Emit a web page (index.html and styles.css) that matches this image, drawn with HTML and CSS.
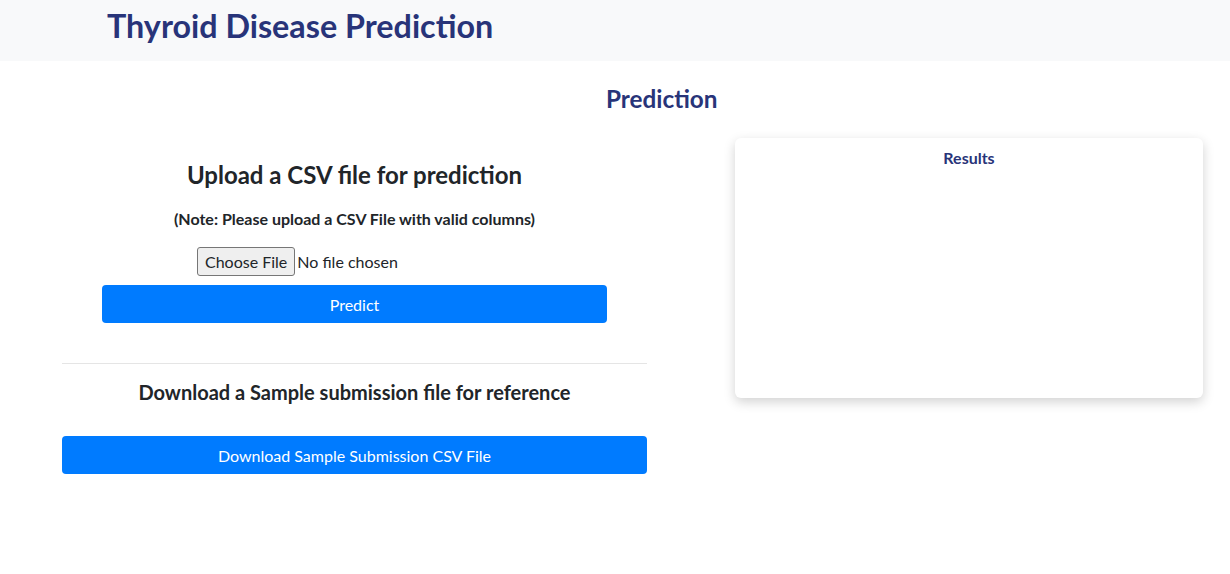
FILE: index.html
```html
<!DOCTYPE html>
<html>
<head>
<meta charset="utf-8">
<link rel="stylesheet" href="styles.css">
</head>
<body>
<header class="topbar">
  <h1 class="brand">Thyroid Disease Prediction</h1>
</header>
<main class="page">
  <h2 class="section-title">Prediction</h2>
  <div class="row">
    <section class="left">
      <h3 class="upload-title">Upload a CSV file for prediction</h3>
      <p class="note">(Note: Please upload a CSV File with valid columns)</p>
      <div class="file-row">
        <input type="file" class="file-input">
      </div>
      <div class="predict-wrap">
        <button class="btn">Predict</button>
      </div>
      <hr class="divider">
      <h4 class="download-title">Download a Sample submission file for reference</h4>
      <button class="btn btn-wide">Download Sample Submission CSV File</button>
    </section>
    <aside class="card">
      <h5 class="results">Results</h5>
    </aside>
  </div>
</main>
</body>
</html>
```

FILE: styles.css
```css
* { box-sizing: border-box; }
html, body { margin: 0; padding: 0; background: #fff; }
body {
  font-family: Lato, "Liberation Sans", sans-serif;
  color: #212529;
}
.topbar {
  background: #f8f9fa;
  height: 61px;
  padding-left: 107px;
  display: flex;
  align-items: center;
}
.brand {
  margin: 0;
  font-size: 32.3px;
  font-weight: 700;
  color: #283479;
  line-height: 1;
  padding-bottom: 8px;
}
.page { padding: 0 27px 0 62px; }
.section-title {
  margin: 24px 0 0 0;
  padding-left: 544px;
  font-size: 24.3px;
  font-weight: 700;
  color: #283479;
  line-height: 28px;
}
.row {
  display: flex;
  margin-top: 25px;
}
.left {
  width: 585px;
  text-align: center;
  padding-top: 22px;
}
.upload-title {
  margin: 0;
  font-size: 24px;
  font-weight: 700;
  line-height: 30px;
}
.note {
  margin: 19px 0 0 0;
  font-size: 16px;
  font-weight: 700;
  line-height: 20px;
}
.file-row {
  text-align: left;
  padding-left: 135px;
  margin-top: 18px;
  height: 29px;
  display: flex;
  align-items: center;
}
.file-input {
  font-family: Lato, "Liberation Sans", sans-serif;
  font-size: 16px;
  color: #212529;
}
.file-input::file-selector-button {
  font-family: Lato, "Liberation Sans", sans-serif;
  font-size: 16px;
  color: #212529;
  background: #efefef;
  border: 1px solid #767676;
  border-radius: 3px;
  padding: 4px 7px;
  margin-right: 2px;
}
.predict-wrap { padding: 0 40px; margin-top: 9px; }
.btn {
  display: block;
  width: 100%;
  height: 38px;
  border: 0;
  border-radius: 4px;
  background: #007bff;
  color: #fff;
  font-family: Lato, "Liberation Sans", sans-serif;
  font-size: 16px;
}
.divider {
  margin: 40px 0 0 0;
  border: 0;
  border-top: 1px solid #e5e5e5;
}
.download-title {
  margin: 14px 0 0 0;
  font-size: 20px;
  font-weight: 700;
  line-height: 28px;
}
.btn-wide { margin-top: 30px; }
.card {
  margin-left: 88px;
  width: 468px;
  height: 260px;
  margin-top: 0;
  background: #fff;
  border-radius: 6px;
  box-shadow: 0 4px 12px rgba(0,0,0,0.18);
  text-align: center;
}
.results {
  margin: 11px 0 0 0;
  font-size: 16px;
  font-weight: 700;
  color: #283479;
  line-height: 18px;
}
```
